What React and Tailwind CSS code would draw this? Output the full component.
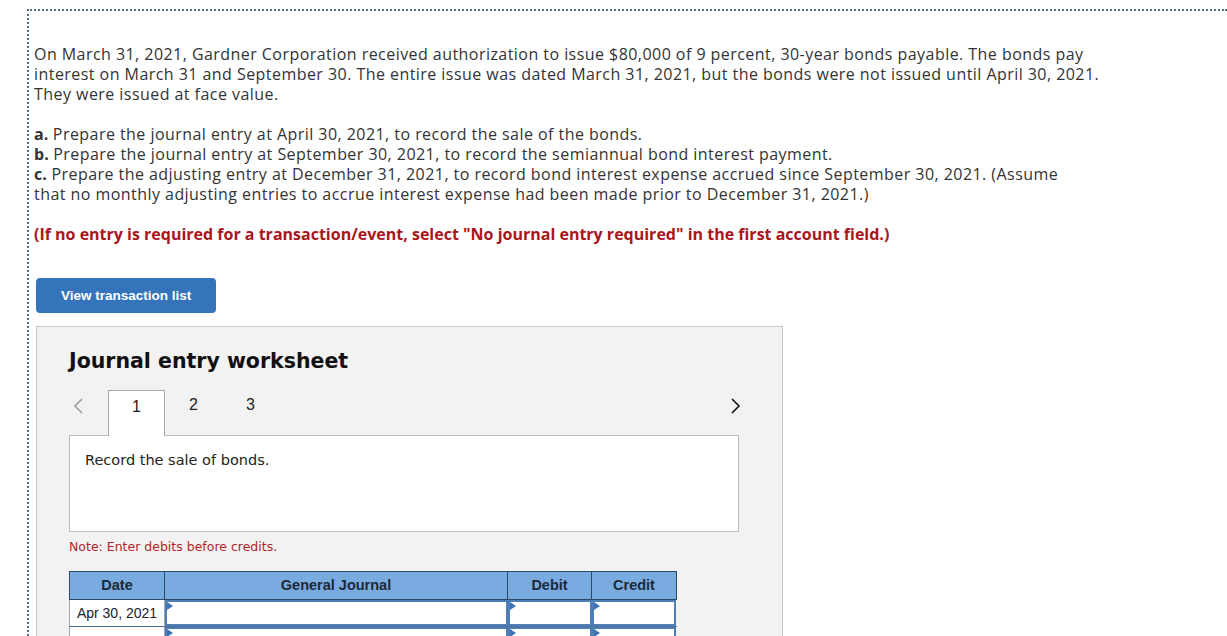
import React from "react";

const body = { fontFamily: "'Open Sans', 'Liberation Sans', sans-serif" };

function Marker() {
  return (
    <span className="absolute left-0 top-0 w-0 h-0 border-t-[4px] border-b-[4px] border-l-[6px] border-t-transparent border-b-transparent border-l-[#3c72b8]" />
  );
}

function InputCell({ w }) {
  return (
    <div className={`relative ${w} h-full bg-white border-2 border-[#4f7db5]`}>
      <Marker />
    </div>
  );
}

function Row({ date }) {
  return (
    <div className="flex h-[27px] border-b border-[#4d6f96]">
      <div className="w-[96px] h-full bg-white border-l border-r border-[#9aa7b5] flex items-center justify-center text-[14px] text-[#222]">
        {date}
      </div>
      <InputCell w="w-[343px]" />
      <InputCell w="w-[84px]" />
      <InputCell w="w-[84px]" />
    </div>
  );
}

export default function App() {
  return (
    <div className="w-[1227px] h-[636px] overflow-hidden bg-white pt-[9px] pl-[27px]">
      <div className="h-full border-t-2 border-l-2 border-dotted border-[#4f6e7e] pl-[5px] pt-[33px]">
        <div className="text-[16px] leading-[20px] tracking-[0.45px] text-[#333]" style={body}>
          <div>
            On March 31, 2021, Gardner Corporation received authorization to issue $80,000 of 9 percent, 30-year bonds payable. The bonds pay
            <br />
            interest on March 31 and September 30. The entire issue was dated March 31, 2021, but the bonds were not issued until April 30, 2021.
            <br />
            They were issued at face value.
          </div>
          <div className="mt-[20px]">
            <b className="font-bold tracking-normal">a.</b> Prepare the journal entry at April 30, 2021, to record the sale of the bonds.
            <br />
            <b className="font-bold tracking-normal">b.</b> Prepare the journal entry at September 30, 2021, to record the semiannual bond interest payment.
            <br />
            <b className="font-bold tracking-normal">c.</b> Prepare the adjusting entry at December 31, 2021, to record bond interest expense accrued since September 30, 2021. (Assume
            <br />
            that no monthly adjusting entries to accrue interest expense had been made prior to December 31, 2021.)
          </div>
          <div className="mt-[20px] font-bold tracking-normal text-[#a8161c]">
            (If no entry is required for a transaction/event, select "No journal entry required" in the first account field.)
          </div>
        </div>

        <button
          className="mt-[34px] ml-[2px] w-[180px] h-[35px] rounded-[4px] bg-[#3573bb] text-white text-[13.5px] font-bold text-left pl-[25px] pt-[2px]"
          style={{ fontFamily: "'Liberation Sans', Arial, sans-serif" }}
        >
          View transaction list
        </button>

        <div className="mt-[13px] ml-[2px] w-[747px] h-[400px] bg-[#f2f2f2] border border-[#c9c9c9] pl-[32px] pt-[21px]">
          <div
            className="text-[20.5px] leading-[26px] font-bold text-[#111]"
            style={{ fontFamily: "'DejaVu Sans', Verdana, sans-serif" }}
          >
            Journal entry worksheet
          </div>

          <div className="mt-[15px] w-[681px] flex items-end h-[46px] text-[16px] text-[#222]" style={{ fontFamily: "'Liberation Sans', Arial, sans-serif" }}>
            <div className="w-[39px] h-full flex items-center pl-[3px] pb-[12px]">
              <svg width="12" height="18" viewBox="0 0 12 18" fill="none">
                <path d="M10 2 L3 9 L10 16" stroke="#9a9a9a" strokeWidth="1.6" />
              </svg>
            </div>
            <div className="relative z-10 -mb-px w-[57px] h-[46px] bg-white border border-b-0 border-[#a9a9a9] flex items-center justify-center pb-[14px]">
              1
            </div>
            <div className="w-[57px] h-full flex items-center justify-center pb-[14px]">2</div>
            <div className="w-[57px] h-full flex items-center justify-center pb-[14px]">3</div>
            <div className="flex-1" />
            <div className="w-[20px] h-full flex items-center pb-[12px]">
              <svg width="12" height="18" viewBox="0 0 12 18" fill="none">
                <path d="M2 2 L9 9 L2 16" stroke="#111" strokeWidth="1.6" />
              </svg>
            </div>
          </div>

          <div
            className="w-[670px] h-[97px] bg-white border border-[#bdbdbd] pl-[15px] pt-[14px] text-[14.5px] text-[#222]"
            style={{ fontFamily: "'DejaVu Sans', Verdana, sans-serif" }}
          >
            Record the sale of bonds.
          </div>

          <div
            className="mt-[8px] text-[12.5px] leading-[14px] text-[#b0262a]"
            style={{ fontFamily: "'DejaVu Sans', Verdana, sans-serif" }}
          >
            Note: Enter debits before credits.
          </div>

          <div className="mt-[17px] w-[608px]" style={{ fontFamily: "'Liberation Sans', Arial, sans-serif" }}>
            <div className="flex h-[29px] bg-[#7aabe0] border border-[#2c4a68] text-[14.5px] font-bold text-[#1c2a38]">
              <div className="w-[95px] flex items-center justify-center border-r border-[#2c4a68]">Date</div>
              <div className="w-[343px] flex items-center justify-center border-r border-[#2c4a68]">General Journal</div>
              <div className="w-[84px] flex items-center justify-center border-r border-[#2c4a68]">Debit</div>
              <div className="flex-1 flex items-center justify-center">Credit</div>
            </div>
            <Row date="Apr 30, 2021" />
            <Row date="" />
          </div>
        </div>
      </div>
    </div>
  );
}
